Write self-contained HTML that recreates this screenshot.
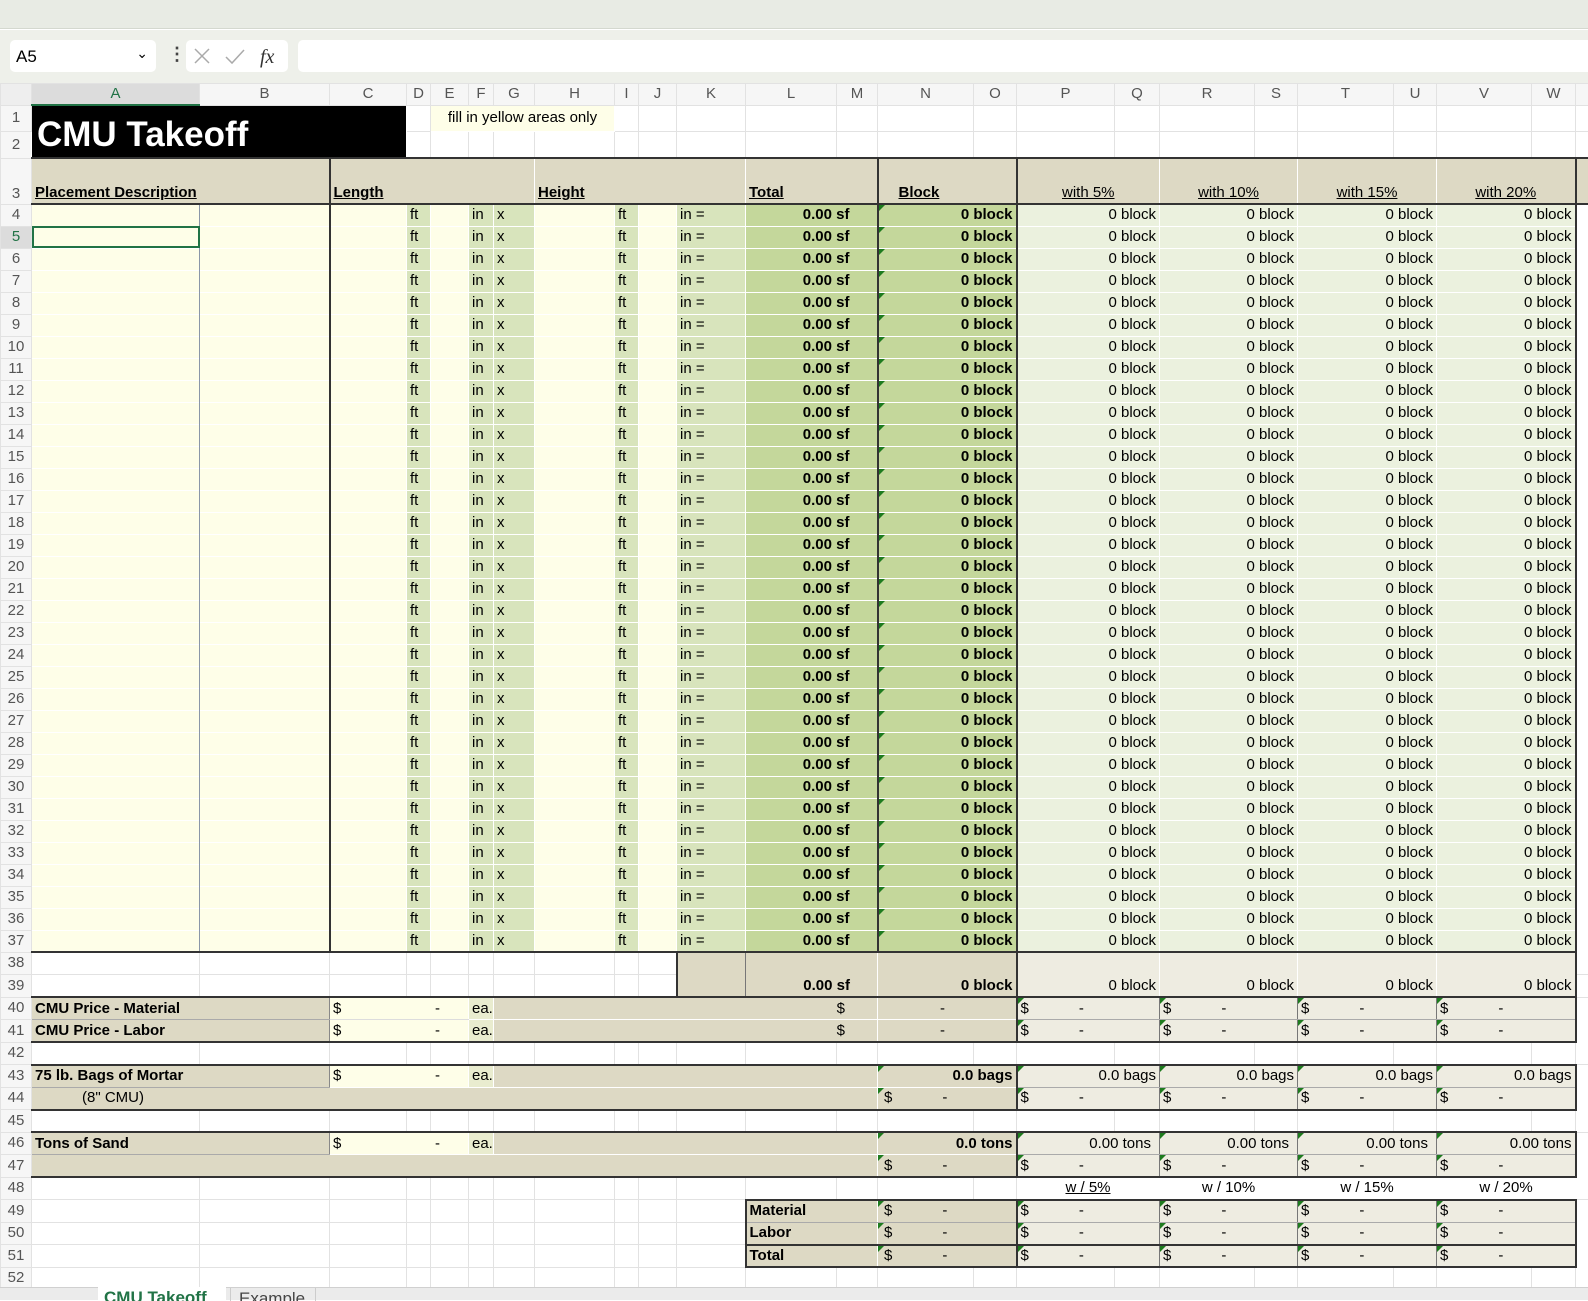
<!DOCTYPE html>
<html><head><meta charset="utf-8"><style>
*{box-sizing:border-box;margin:0;padding:0}
body{width:1588px;height:1300px;overflow:hidden;background:#fff;font-family:"Liberation Sans Narrow","Liberation Sans",sans-serif;position:relative;color:#000}
.top{position:absolute;left:0;top:0;width:1588px;height:29px;background:#e8ebe4;border-bottom:1px solid #d4d8cf}
.fb{position:absolute;left:0;top:30px;width:1588px;height:53px;background:#eef0ea}
.nb{position:absolute;left:10px;top:40px;width:146px;height:32px;background:#fff;border-radius:5px;font:17px "Liberation Sans",sans-serif;padding:7px 6px}
.fx{position:absolute;left:186px;top:40px;width:102px;height:32px;background:#fff;border-radius:5px}
.fi{position:absolute;left:298px;top:40px;width:1290px;height:32px;background:#fff;border-radius:5px 0 0 5px}
table{position:absolute;left:0;top:83px;border-collapse:collapse;table-layout:fixed;width:1588px}
td,th{font-size:15px;white-space:nowrap;overflow:hidden;padding:0 3px;height:22px;line-height:20px}
th{background:#f6f6f6;color:#555;font-weight:normal;text-align:center;border:1px solid #e2e2e2;padding:0}
tr.ch th{height:20px;font-size:15px}
td{border:1px solid transparent}
.w{border:1px solid #e2e2e2}
.y{background:#fefee8}.g{background:#d8e4bc}.G{background:#c4d79b}.p{background:#ebf1de}.t{background:#ddd9c4}.lt{background:#eeece1}.fe{background:#e9eccf}
.r{text-align:right}.b{font-weight:bold}.u{text-decoration:underline}
.a{border-bottom:1px dotted #888;border-right:1px solid #8a96a8}
.bb{border-bottom:1px dotted #888;border-right:2px solid #333}
.lk{border-left:2px solid #333}.rk{border-right:2px solid #333}
.d{border-right:1px dashed #999}
.tk{border-top:2px solid #333}.bk{border-bottom:2px solid #333}
.tri{position:relative}
.tri::before{content:"";position:absolute;left:0;top:0;border-top:6px solid #1e7b1e;border-right:6px solid transparent}
.sel{outline:2px solid #217346;outline-offset:-2px}
.tabs{position:absolute;left:0;top:1287px;width:1588px;height:13px;background:#ebebeb;border-top:1px solid #d0d0d0}
</style></head><body>
<div class="top"></div>
<div class="fb"></div>
<div class="nb">A5<span style="position:absolute;right:8px;top:5px;font-size:14px">&#8964;</span></div>
<div style="position:absolute;left:168px;top:44px;font:bold 18px 'Liberation Sans';color:#444">&#8942;</div>
<div class="fx"><svg width="102" height="32"><path d="M9 9l14 14M23 9L9 23" stroke="#aaa" stroke-width="1.5" fill="none"/><path d="M40 17l6 6 12-13" stroke="#aaa" stroke-width="1.5" fill="none"/><text x="74" y="23" font-family="Liberation Serif" font-style="italic" font-size="20" fill="#333">fx</text></svg></div>
<div class="fi"></div>
<table>
<colgroup><col style="width:31px"><col style="width:168px"><col style="width:130px"><col style="width:77px"><col style="width:24px"><col style="width:38px"><col style="width:25px"><col style="width:41px"><col style="width:80px"><col style="width:24px"><col style="width:38px"><col style="width:69px"><col style="width:91px"><col style="width:41px"><col style="width:96px"><col style="width:43px"><col style="width:98px"><col style="width:45px"><col style="width:95px"><col style="width:43px"><col style="width:96px"><col style="width:43px"><col style="width:95px"><col style="width:44px"><col style="width:13px"></colgroup>
<tr class="ch"><th style="background:#eee"></th><th style="background:#dcdcdc;border-bottom:2px solid #217346;color:#217346">A</th><th>B</th><th>C</th><th>D</th><th>E</th><th>F</th><th>G</th><th>H</th><th>I</th><th>J</th><th>K</th><th>L</th><th>M</th><th>N</th><th>O</th><th>P</th><th>Q</th><th>R</th><th>S</th><th>T</th><th>U</th><th>V</th><th>W</th><th></th></tr>
<tr style="height:26px"><th>1</th><td colspan="3" rowspan="2" style="background:#000;color:#fff;font:bold 35px 'Liberation Sans',sans-serif;padding:6px 5px 0;vertical-align:middle">CMU Takeoff</td><td class="w"></td><td colspan="4" style="background:#fefee8;text-align:center;font-size:15px">fill in yellow areas only</td><td class="w"></td><td class="w"></td><td class="w"></td><td class="w"></td><td class="w"></td><td class="w"></td><td class="w"></td><td class="w"></td><td class="w"></td><td class="w"></td><td class="w"></td><td class="w"></td><td class="w"></td><td class="w"></td><td class="w"></td></tr>
<tr style="height:27px"><th>2</th><td class="w"></td><td class="w"></td><td class="w"></td><td class="w"></td><td class="w"></td><td class="w"></td><td class="w"></td><td class="w"></td><td class="w"></td><td class="w"></td><td class="w"></td><td class="w"></td><td class="w"></td><td class="w"></td><td class="w"></td><td class="w"></td><td class="w"></td><td class="w"></td><td class="w"></td><td class="w"></td><td class="w"></td></tr>
<tr style="height:46px;vertical-align:bottom"><th style="vertical-align:bottom">3</th><td colspan="2" class="t tk bk rk b u">Placement Description</td><td colspan="5" class="t tk bk b u">Length</td><td colspan="4" class="t tk bk b u">Height</td><td colspan="2" class="t tk bk b u">Total</td><td colspan="2" class="t tk bk lk rk b u" style="padding-left:20px">Block</td><td colspan="2" class="t tk bk u" style="text-align:center">with 5%</td><td colspan="2" class="t tk bk u" style="text-align:center">with 10%</td><td colspan="2" class="t tk bk u" style="text-align:center">with 15%</td><td colspan="2" class="t tk bk rk u" style="text-align:center">with 20%</td><td class="t tk bk"></td></tr>
<tr><th>4</th><td class="y a"></td><td class="y bb"></td><td class="y"></td><td class="g">ft</td><td class="y"></td><td class="g">in</td><td class="g">x</td><td class="y"></td><td class="g">ft</td><td class="y"></td><td class="g">in =</td><td colspan="2" class="G r b" style="padding-right:27px">0.00 sf</td><td colspan="2" class="G r b lk rk tri">0 block</td><td colspan="2" class="p r d">0 block</td><td colspan="2" class="p r d">0 block</td><td colspan="2" class="p r d">0 block</td><td colspan="2" class="p r rk">0 block</td><td></td></tr>
<tr><th style="background:#dcdcdc;color:#217346">5</th><td class="y a sel"></td><td class="y bb"></td><td class="y"></td><td class="g">ft</td><td class="y"></td><td class="g">in</td><td class="g">x</td><td class="y"></td><td class="g">ft</td><td class="y"></td><td class="g">in =</td><td colspan="2" class="G r b" style="padding-right:27px">0.00 sf</td><td colspan="2" class="G r b lk rk tri">0 block</td><td colspan="2" class="p r d">0 block</td><td colspan="2" class="p r d">0 block</td><td colspan="2" class="p r d">0 block</td><td colspan="2" class="p r rk">0 block</td><td></td></tr>
<tr><th>6</th><td class="y a"></td><td class="y bb"></td><td class="y"></td><td class="g">ft</td><td class="y"></td><td class="g">in</td><td class="g">x</td><td class="y"></td><td class="g">ft</td><td class="y"></td><td class="g">in =</td><td colspan="2" class="G r b" style="padding-right:27px">0.00 sf</td><td colspan="2" class="G r b lk rk tri">0 block</td><td colspan="2" class="p r d">0 block</td><td colspan="2" class="p r d">0 block</td><td colspan="2" class="p r d">0 block</td><td colspan="2" class="p r rk">0 block</td><td></td></tr>
<tr><th>7</th><td class="y a"></td><td class="y bb"></td><td class="y"></td><td class="g">ft</td><td class="y"></td><td class="g">in</td><td class="g">x</td><td class="y"></td><td class="g">ft</td><td class="y"></td><td class="g">in =</td><td colspan="2" class="G r b" style="padding-right:27px">0.00 sf</td><td colspan="2" class="G r b lk rk tri">0 block</td><td colspan="2" class="p r d">0 block</td><td colspan="2" class="p r d">0 block</td><td colspan="2" class="p r d">0 block</td><td colspan="2" class="p r rk">0 block</td><td></td></tr>
<tr><th>8</th><td class="y a"></td><td class="y bb"></td><td class="y"></td><td class="g">ft</td><td class="y"></td><td class="g">in</td><td class="g">x</td><td class="y"></td><td class="g">ft</td><td class="y"></td><td class="g">in =</td><td colspan="2" class="G r b" style="padding-right:27px">0.00 sf</td><td colspan="2" class="G r b lk rk tri">0 block</td><td colspan="2" class="p r d">0 block</td><td colspan="2" class="p r d">0 block</td><td colspan="2" class="p r d">0 block</td><td colspan="2" class="p r rk">0 block</td><td></td></tr>
<tr><th>9</th><td class="y a"></td><td class="y bb"></td><td class="y"></td><td class="g">ft</td><td class="y"></td><td class="g">in</td><td class="g">x</td><td class="y"></td><td class="g">ft</td><td class="y"></td><td class="g">in =</td><td colspan="2" class="G r b" style="padding-right:27px">0.00 sf</td><td colspan="2" class="G r b lk rk tri">0 block</td><td colspan="2" class="p r d">0 block</td><td colspan="2" class="p r d">0 block</td><td colspan="2" class="p r d">0 block</td><td colspan="2" class="p r rk">0 block</td><td></td></tr>
<tr><th>10</th><td class="y a"></td><td class="y bb"></td><td class="y"></td><td class="g">ft</td><td class="y"></td><td class="g">in</td><td class="g">x</td><td class="y"></td><td class="g">ft</td><td class="y"></td><td class="g">in =</td><td colspan="2" class="G r b" style="padding-right:27px">0.00 sf</td><td colspan="2" class="G r b lk rk tri">0 block</td><td colspan="2" class="p r d">0 block</td><td colspan="2" class="p r d">0 block</td><td colspan="2" class="p r d">0 block</td><td colspan="2" class="p r rk">0 block</td><td></td></tr>
<tr><th>11</th><td class="y a"></td><td class="y bb"></td><td class="y"></td><td class="g">ft</td><td class="y"></td><td class="g">in</td><td class="g">x</td><td class="y"></td><td class="g">ft</td><td class="y"></td><td class="g">in =</td><td colspan="2" class="G r b" style="padding-right:27px">0.00 sf</td><td colspan="2" class="G r b lk rk tri">0 block</td><td colspan="2" class="p r d">0 block</td><td colspan="2" class="p r d">0 block</td><td colspan="2" class="p r d">0 block</td><td colspan="2" class="p r rk">0 block</td><td></td></tr>
<tr><th>12</th><td class="y a"></td><td class="y bb"></td><td class="y"></td><td class="g">ft</td><td class="y"></td><td class="g">in</td><td class="g">x</td><td class="y"></td><td class="g">ft</td><td class="y"></td><td class="g">in =</td><td colspan="2" class="G r b" style="padding-right:27px">0.00 sf</td><td colspan="2" class="G r b lk rk tri">0 block</td><td colspan="2" class="p r d">0 block</td><td colspan="2" class="p r d">0 block</td><td colspan="2" class="p r d">0 block</td><td colspan="2" class="p r rk">0 block</td><td></td></tr>
<tr><th>13</th><td class="y a"></td><td class="y bb"></td><td class="y"></td><td class="g">ft</td><td class="y"></td><td class="g">in</td><td class="g">x</td><td class="y"></td><td class="g">ft</td><td class="y"></td><td class="g">in =</td><td colspan="2" class="G r b" style="padding-right:27px">0.00 sf</td><td colspan="2" class="G r b lk rk tri">0 block</td><td colspan="2" class="p r d">0 block</td><td colspan="2" class="p r d">0 block</td><td colspan="2" class="p r d">0 block</td><td colspan="2" class="p r rk">0 block</td><td></td></tr>
<tr><th>14</th><td class="y a"></td><td class="y bb"></td><td class="y"></td><td class="g">ft</td><td class="y"></td><td class="g">in</td><td class="g">x</td><td class="y"></td><td class="g">ft</td><td class="y"></td><td class="g">in =</td><td colspan="2" class="G r b" style="padding-right:27px">0.00 sf</td><td colspan="2" class="G r b lk rk tri">0 block</td><td colspan="2" class="p r d">0 block</td><td colspan="2" class="p r d">0 block</td><td colspan="2" class="p r d">0 block</td><td colspan="2" class="p r rk">0 block</td><td></td></tr>
<tr><th>15</th><td class="y a"></td><td class="y bb"></td><td class="y"></td><td class="g">ft</td><td class="y"></td><td class="g">in</td><td class="g">x</td><td class="y"></td><td class="g">ft</td><td class="y"></td><td class="g">in =</td><td colspan="2" class="G r b" style="padding-right:27px">0.00 sf</td><td colspan="2" class="G r b lk rk tri">0 block</td><td colspan="2" class="p r d">0 block</td><td colspan="2" class="p r d">0 block</td><td colspan="2" class="p r d">0 block</td><td colspan="2" class="p r rk">0 block</td><td></td></tr>
<tr><th>16</th><td class="y a"></td><td class="y bb"></td><td class="y"></td><td class="g">ft</td><td class="y"></td><td class="g">in</td><td class="g">x</td><td class="y"></td><td class="g">ft</td><td class="y"></td><td class="g">in =</td><td colspan="2" class="G r b" style="padding-right:27px">0.00 sf</td><td colspan="2" class="G r b lk rk tri">0 block</td><td colspan="2" class="p r d">0 block</td><td colspan="2" class="p r d">0 block</td><td colspan="2" class="p r d">0 block</td><td colspan="2" class="p r rk">0 block</td><td></td></tr>
<tr><th>17</th><td class="y a"></td><td class="y bb"></td><td class="y"></td><td class="g">ft</td><td class="y"></td><td class="g">in</td><td class="g">x</td><td class="y"></td><td class="g">ft</td><td class="y"></td><td class="g">in =</td><td colspan="2" class="G r b" style="padding-right:27px">0.00 sf</td><td colspan="2" class="G r b lk rk tri">0 block</td><td colspan="2" class="p r d">0 block</td><td colspan="2" class="p r d">0 block</td><td colspan="2" class="p r d">0 block</td><td colspan="2" class="p r rk">0 block</td><td></td></tr>
<tr><th>18</th><td class="y a"></td><td class="y bb"></td><td class="y"></td><td class="g">ft</td><td class="y"></td><td class="g">in</td><td class="g">x</td><td class="y"></td><td class="g">ft</td><td class="y"></td><td class="g">in =</td><td colspan="2" class="G r b" style="padding-right:27px">0.00 sf</td><td colspan="2" class="G r b lk rk tri">0 block</td><td colspan="2" class="p r d">0 block</td><td colspan="2" class="p r d">0 block</td><td colspan="2" class="p r d">0 block</td><td colspan="2" class="p r rk">0 block</td><td></td></tr>
<tr><th>19</th><td class="y a"></td><td class="y bb"></td><td class="y"></td><td class="g">ft</td><td class="y"></td><td class="g">in</td><td class="g">x</td><td class="y"></td><td class="g">ft</td><td class="y"></td><td class="g">in =</td><td colspan="2" class="G r b" style="padding-right:27px">0.00 sf</td><td colspan="2" class="G r b lk rk tri">0 block</td><td colspan="2" class="p r d">0 block</td><td colspan="2" class="p r d">0 block</td><td colspan="2" class="p r d">0 block</td><td colspan="2" class="p r rk">0 block</td><td></td></tr>
<tr><th>20</th><td class="y a"></td><td class="y bb"></td><td class="y"></td><td class="g">ft</td><td class="y"></td><td class="g">in</td><td class="g">x</td><td class="y"></td><td class="g">ft</td><td class="y"></td><td class="g">in =</td><td colspan="2" class="G r b" style="padding-right:27px">0.00 sf</td><td colspan="2" class="G r b lk rk tri">0 block</td><td colspan="2" class="p r d">0 block</td><td colspan="2" class="p r d">0 block</td><td colspan="2" class="p r d">0 block</td><td colspan="2" class="p r rk">0 block</td><td></td></tr>
<tr><th>21</th><td class="y a"></td><td class="y bb"></td><td class="y"></td><td class="g">ft</td><td class="y"></td><td class="g">in</td><td class="g">x</td><td class="y"></td><td class="g">ft</td><td class="y"></td><td class="g">in =</td><td colspan="2" class="G r b" style="padding-right:27px">0.00 sf</td><td colspan="2" class="G r b lk rk tri">0 block</td><td colspan="2" class="p r d">0 block</td><td colspan="2" class="p r d">0 block</td><td colspan="2" class="p r d">0 block</td><td colspan="2" class="p r rk">0 block</td><td></td></tr>
<tr><th>22</th><td class="y a"></td><td class="y bb"></td><td class="y"></td><td class="g">ft</td><td class="y"></td><td class="g">in</td><td class="g">x</td><td class="y"></td><td class="g">ft</td><td class="y"></td><td class="g">in =</td><td colspan="2" class="G r b" style="padding-right:27px">0.00 sf</td><td colspan="2" class="G r b lk rk tri">0 block</td><td colspan="2" class="p r d">0 block</td><td colspan="2" class="p r d">0 block</td><td colspan="2" class="p r d">0 block</td><td colspan="2" class="p r rk">0 block</td><td></td></tr>
<tr><th>23</th><td class="y a"></td><td class="y bb"></td><td class="y"></td><td class="g">ft</td><td class="y"></td><td class="g">in</td><td class="g">x</td><td class="y"></td><td class="g">ft</td><td class="y"></td><td class="g">in =</td><td colspan="2" class="G r b" style="padding-right:27px">0.00 sf</td><td colspan="2" class="G r b lk rk tri">0 block</td><td colspan="2" class="p r d">0 block</td><td colspan="2" class="p r d">0 block</td><td colspan="2" class="p r d">0 block</td><td colspan="2" class="p r rk">0 block</td><td></td></tr>
<tr><th>24</th><td class="y a"></td><td class="y bb"></td><td class="y"></td><td class="g">ft</td><td class="y"></td><td class="g">in</td><td class="g">x</td><td class="y"></td><td class="g">ft</td><td class="y"></td><td class="g">in =</td><td colspan="2" class="G r b" style="padding-right:27px">0.00 sf</td><td colspan="2" class="G r b lk rk tri">0 block</td><td colspan="2" class="p r d">0 block</td><td colspan="2" class="p r d">0 block</td><td colspan="2" class="p r d">0 block</td><td colspan="2" class="p r rk">0 block</td><td></td></tr>
<tr><th>25</th><td class="y a"></td><td class="y bb"></td><td class="y"></td><td class="g">ft</td><td class="y"></td><td class="g">in</td><td class="g">x</td><td class="y"></td><td class="g">ft</td><td class="y"></td><td class="g">in =</td><td colspan="2" class="G r b" style="padding-right:27px">0.00 sf</td><td colspan="2" class="G r b lk rk tri">0 block</td><td colspan="2" class="p r d">0 block</td><td colspan="2" class="p r d">0 block</td><td colspan="2" class="p r d">0 block</td><td colspan="2" class="p r rk">0 block</td><td></td></tr>
<tr><th>26</th><td class="y a"></td><td class="y bb"></td><td class="y"></td><td class="g">ft</td><td class="y"></td><td class="g">in</td><td class="g">x</td><td class="y"></td><td class="g">ft</td><td class="y"></td><td class="g">in =</td><td colspan="2" class="G r b" style="padding-right:27px">0.00 sf</td><td colspan="2" class="G r b lk rk tri">0 block</td><td colspan="2" class="p r d">0 block</td><td colspan="2" class="p r d">0 block</td><td colspan="2" class="p r d">0 block</td><td colspan="2" class="p r rk">0 block</td><td></td></tr>
<tr><th>27</th><td class="y a"></td><td class="y bb"></td><td class="y"></td><td class="g">ft</td><td class="y"></td><td class="g">in</td><td class="g">x</td><td class="y"></td><td class="g">ft</td><td class="y"></td><td class="g">in =</td><td colspan="2" class="G r b" style="padding-right:27px">0.00 sf</td><td colspan="2" class="G r b lk rk tri">0 block</td><td colspan="2" class="p r d">0 block</td><td colspan="2" class="p r d">0 block</td><td colspan="2" class="p r d">0 block</td><td colspan="2" class="p r rk">0 block</td><td></td></tr>
<tr><th>28</th><td class="y a"></td><td class="y bb"></td><td class="y"></td><td class="g">ft</td><td class="y"></td><td class="g">in</td><td class="g">x</td><td class="y"></td><td class="g">ft</td><td class="y"></td><td class="g">in =</td><td colspan="2" class="G r b" style="padding-right:27px">0.00 sf</td><td colspan="2" class="G r b lk rk tri">0 block</td><td colspan="2" class="p r d">0 block</td><td colspan="2" class="p r d">0 block</td><td colspan="2" class="p r d">0 block</td><td colspan="2" class="p r rk">0 block</td><td></td></tr>
<tr><th>29</th><td class="y a"></td><td class="y bb"></td><td class="y"></td><td class="g">ft</td><td class="y"></td><td class="g">in</td><td class="g">x</td><td class="y"></td><td class="g">ft</td><td class="y"></td><td class="g">in =</td><td colspan="2" class="G r b" style="padding-right:27px">0.00 sf</td><td colspan="2" class="G r b lk rk tri">0 block</td><td colspan="2" class="p r d">0 block</td><td colspan="2" class="p r d">0 block</td><td colspan="2" class="p r d">0 block</td><td colspan="2" class="p r rk">0 block</td><td></td></tr>
<tr><th>30</th><td class="y a"></td><td class="y bb"></td><td class="y"></td><td class="g">ft</td><td class="y"></td><td class="g">in</td><td class="g">x</td><td class="y"></td><td class="g">ft</td><td class="y"></td><td class="g">in =</td><td colspan="2" class="G r b" style="padding-right:27px">0.00 sf</td><td colspan="2" class="G r b lk rk tri">0 block</td><td colspan="2" class="p r d">0 block</td><td colspan="2" class="p r d">0 block</td><td colspan="2" class="p r d">0 block</td><td colspan="2" class="p r rk">0 block</td><td></td></tr>
<tr><th>31</th><td class="y a"></td><td class="y bb"></td><td class="y"></td><td class="g">ft</td><td class="y"></td><td class="g">in</td><td class="g">x</td><td class="y"></td><td class="g">ft</td><td class="y"></td><td class="g">in =</td><td colspan="2" class="G r b" style="padding-right:27px">0.00 sf</td><td colspan="2" class="G r b lk rk tri">0 block</td><td colspan="2" class="p r d">0 block</td><td colspan="2" class="p r d">0 block</td><td colspan="2" class="p r d">0 block</td><td colspan="2" class="p r rk">0 block</td><td></td></tr>
<tr><th>32</th><td class="y a"></td><td class="y bb"></td><td class="y"></td><td class="g">ft</td><td class="y"></td><td class="g">in</td><td class="g">x</td><td class="y"></td><td class="g">ft</td><td class="y"></td><td class="g">in =</td><td colspan="2" class="G r b" style="padding-right:27px">0.00 sf</td><td colspan="2" class="G r b lk rk tri">0 block</td><td colspan="2" class="p r d">0 block</td><td colspan="2" class="p r d">0 block</td><td colspan="2" class="p r d">0 block</td><td colspan="2" class="p r rk">0 block</td><td></td></tr>
<tr><th>33</th><td class="y a"></td><td class="y bb"></td><td class="y"></td><td class="g">ft</td><td class="y"></td><td class="g">in</td><td class="g">x</td><td class="y"></td><td class="g">ft</td><td class="y"></td><td class="g">in =</td><td colspan="2" class="G r b" style="padding-right:27px">0.00 sf</td><td colspan="2" class="G r b lk rk tri">0 block</td><td colspan="2" class="p r d">0 block</td><td colspan="2" class="p r d">0 block</td><td colspan="2" class="p r d">0 block</td><td colspan="2" class="p r rk">0 block</td><td></td></tr>
<tr><th>34</th><td class="y a"></td><td class="y bb"></td><td class="y"></td><td class="g">ft</td><td class="y"></td><td class="g">in</td><td class="g">x</td><td class="y"></td><td class="g">ft</td><td class="y"></td><td class="g">in =</td><td colspan="2" class="G r b" style="padding-right:27px">0.00 sf</td><td colspan="2" class="G r b lk rk tri">0 block</td><td colspan="2" class="p r d">0 block</td><td colspan="2" class="p r d">0 block</td><td colspan="2" class="p r d">0 block</td><td colspan="2" class="p r rk">0 block</td><td></td></tr>
<tr><th>35</th><td class="y a"></td><td class="y bb"></td><td class="y"></td><td class="g">ft</td><td class="y"></td><td class="g">in</td><td class="g">x</td><td class="y"></td><td class="g">ft</td><td class="y"></td><td class="g">in =</td><td colspan="2" class="G r b" style="padding-right:27px">0.00 sf</td><td colspan="2" class="G r b lk rk tri">0 block</td><td colspan="2" class="p r d">0 block</td><td colspan="2" class="p r d">0 block</td><td colspan="2" class="p r d">0 block</td><td colspan="2" class="p r rk">0 block</td><td></td></tr>
<tr><th>36</th><td class="y a"></td><td class="y bb"></td><td class="y"></td><td class="g">ft</td><td class="y"></td><td class="g">in</td><td class="g">x</td><td class="y"></td><td class="g">ft</td><td class="y"></td><td class="g">in =</td><td colspan="2" class="G r b" style="padding-right:27px">0.00 sf</td><td colspan="2" class="G r b lk rk tri">0 block</td><td colspan="2" class="p r d">0 block</td><td colspan="2" class="p r d">0 block</td><td colspan="2" class="p r d">0 block</td><td colspan="2" class="p r rk">0 block</td><td></td></tr>
<tr><th>37</th><td class="y bk" style="border-right:1px solid #8a96a8"></td><td class="y bk rk"></td><td class="y bk"></td><td class="g bk">ft</td><td class="y bk"></td><td class="g bk">in</td><td class="g bk">x</td><td class="y bk"></td><td class="g bk">ft</td><td class="y bk"></td><td class="g bk">in =</td><td colspan="2" class="G r b bk" style="padding-right:27px">0.00 sf</td><td colspan="2" class="G r b lk rk bk tri">0 block</td><td colspan="2" class="p r d bk">0 block</td><td colspan="2" class="p r d bk">0 block</td><td colspan="2" class="p r d bk">0 block</td><td colspan="2" class="p r rk bk">0 block</td><td></td></tr>
<tr style="height:22.5px"><th>38</th><td class="w"></td><td class="w"></td><td class="w"></td><td class="w"></td><td class="w"></td><td class="w"></td><td class="w"></td><td class="w"></td><td class="w"></td><td class="w"></td><td class="t lk" rowspan="2" style="border-right:1px solid #777;border-bottom:2px solid #333"></td><td colspan="2" rowspan="2" class="t r b bk" style="padding-right:27px;vertical-align:bottom">0.00 sf</td><td colspan="2" rowspan="2" class="t r b bk rk" style="vertical-align:bottom;border-left:1px solid #777">0 block</td><td colspan="2" rowspan="2" class="lt r d bk" style="vertical-align:bottom">0 block</td><td colspan="2" rowspan="2" class="lt r d bk" style="vertical-align:bottom">0 block</td><td colspan="2" rowspan="2" class="lt r d bk" style="vertical-align:bottom">0 block</td><td colspan="2" rowspan="2" class="lt r rk bk" style="vertical-align:bottom">0 block</td><td class="w"></td></tr>
<tr style="height:22.5px"><th>39</th><td class="w bk"></td><td class="w bk"></td><td class="w bk"></td><td class="w bk"></td><td class="w bk"></td><td class="w bk"></td><td class="w bk"></td><td class="w bk"></td><td class="w bk"></td><td class="w bk"></td><td class="w"></td></tr>
<tr style="height:22.5px"><th>40</th><td colspan="2" class="t b" style="border-right:1px solid #888;border-bottom:1px solid #aaa">CMU Price - Material</td><td colspan="3" class="y" style="border-bottom:1px solid #ddd">$<span style="float:right;padding-right:25px">-</span></td><td class="fe">ea.</td><td colspan="7" class="t r" style="padding-right:32px">$</td><td colspan="2" class="t rk" style="padding-left:62px">-</td><td colspan="2" class="lt tri" style="border-bottom:1px solid #aaa;border-right:1px solid #777">$<span style="padding-left:50px">-</span></td><td colspan="2" class="lt tri" style="border-bottom:1px solid #aaa;border-right:1px solid #777">$<span style="padding-left:50px">-</span></td><td colspan="2" class="lt tri" style="border-bottom:1px solid #aaa;border-right:1px solid #777">$<span style="padding-left:50px">-</span></td><td colspan="2" class="lt tri rk" style="border-bottom:1px solid #aaa">$<span style="padding-left:50px">-</span></td><td></td></tr>
<tr style="height:22.5px"><th>41</th><td colspan="2" class="t b bk" style="border-right:1px solid #888">CMU Price - Labor</td><td colspan="3" class="y bk">$<span style="float:right;padding-right:25px">-</span></td><td class="fe bk">ea.</td><td colspan="7" class="t r bk" style="padding-right:32px">$</td><td colspan="2" class="t rk bk" style="padding-left:62px">-</td><td colspan="2" class="lt tri bk" style="border-right:1px solid #777">$<span style="padding-left:50px">-</span></td><td colspan="2" class="lt tri bk" style="border-right:1px solid #777">$<span style="padding-left:50px">-</span></td><td colspan="2" class="lt tri bk" style="border-right:1px solid #777">$<span style="padding-left:50px">-</span></td><td colspan="2" class="lt tri rk bk">$<span style="padding-left:50px">-</span></td><td></td></tr>
<tr style="height:22.5px"><th>42</th><td class="w"></td><td class="w"></td><td class="w"></td><td class="w"></td><td class="w"></td><td class="w"></td><td class="w"></td><td class="w"></td><td class="w"></td><td class="w"></td><td class="w"></td><td class="w"></td><td class="w"></td><td class="w"></td><td class="w"></td><td class="w"></td><td class="w"></td><td class="w"></td><td class="w"></td><td class="w"></td><td class="w"></td><td class="w"></td><td class="w"></td><td class="w"></td></tr>
<tr style="height:22.5px"><th>43</th><td colspan="2" class="t b tk" style="border-right:1px solid #888;border-bottom:1px solid #aaa">75 lb. Bags of Mortar</td><td colspan="3" class="y tk">$<span style="float:right;padding-right:25px">-</span></td><td class="fe tk">ea.</td><td colspan="7" class="t tk"></td><td colspan="2" class="t r b rk tk tri">0.0 bags</td><td colspan="2" class="lt r tk tri" style="border-bottom:1px solid #aaa;border-right:1px solid #777">0.0 bags</td><td colspan="2" class="lt r tk tri" style="border-bottom:1px solid #aaa;border-right:1px solid #777">0.0 bags</td><td colspan="2" class="lt r tk tri" style="border-bottom:1px solid #aaa;border-right:1px solid #777">0.0 bags</td><td colspan="2" class="lt r tk rk tri" style="border-bottom:1px solid #aaa">0.0 bags</td><td></td></tr>
<tr style="height:22.5px"><th>44</th><td colspan="13" class="t bk" style="padding-left:50px">(8" CMU)</td><td colspan="2" class="t rk bk tri" style="padding-left:6px">$<span style="padding-left:50px">-</span></td><td colspan="2" class="lt tri bk" style="border-right:1px solid #777">$<span style="padding-left:50px">-</span></td><td colspan="2" class="lt tri bk" style="border-right:1px solid #777">$<span style="padding-left:50px">-</span></td><td colspan="2" class="lt tri bk" style="border-right:1px solid #777">$<span style="padding-left:50px">-</span></td><td colspan="2" class="lt tri rk bk">$<span style="padding-left:50px">-</span></td><td></td></tr>
<tr style="height:22.5px"><th>45</th><td class="w"></td><td class="w"></td><td class="w"></td><td class="w"></td><td class="w"></td><td class="w"></td><td class="w"></td><td class="w"></td><td class="w"></td><td class="w"></td><td class="w"></td><td class="w"></td><td class="w"></td><td class="w"></td><td class="w"></td><td class="w"></td><td class="w"></td><td class="w"></td><td class="w"></td><td class="w"></td><td class="w"></td><td class="w"></td><td class="w"></td><td class="w"></td></tr>
<tr style="height:22.5px"><th>46</th><td colspan="2" class="t b tk" style="border-right:1px solid #888;border-bottom:1px solid #aaa">Tons of Sand</td><td colspan="3" class="y tk">$<span style="float:right;padding-right:25px">-</span></td><td class="fe tk">ea.</td><td colspan="7" class="t tk"></td><td colspan="2" class="t r b rk tk tri">0.0 tons</td><td colspan="2" class="lt r tk tri" style="border-bottom:1px solid #aaa;border-right:1px solid #777;padding-right:8px">0.00 tons</td><td colspan="2" class="lt r tk tri" style="border-bottom:1px solid #aaa;border-right:1px solid #777;padding-right:8px">0.00 tons</td><td colspan="2" class="lt r tk tri" style="border-bottom:1px solid #aaa;border-right:1px solid #777;padding-right:8px">0.00 tons</td><td colspan="2" class="lt r tk rk tri" style="border-bottom:1px solid #aaa">0.00 tons</td><td></td></tr>
<tr style="height:22.5px"><th>47</th><td colspan="13" class="t bk"></td><td colspan="2" class="t rk bk tri" style="padding-left:6px">$<span style="padding-left:50px">-</span></td><td colspan="2" class="lt tri bk" style="border-right:1px solid #777">$<span style="padding-left:50px">-</span></td><td colspan="2" class="lt tri bk" style="border-right:1px solid #777">$<span style="padding-left:50px">-</span></td><td colspan="2" class="lt tri bk" style="border-right:1px solid #777">$<span style="padding-left:50px">-</span></td><td colspan="2" class="lt tri rk bk">$<span style="padding-left:50px">-</span></td><td></td></tr>
<tr style="height:22.5px"><th>48</th><td class="w"></td><td class="w"></td><td class="w"></td><td class="w"></td><td class="w"></td><td class="w"></td><td class="w"></td><td class="w"></td><td class="w"></td><td class="w"></td><td class="w"></td><td class="w"></td><td class="w"></td><td class="w"></td><td class="w"></td><td colspan="2" style="text-align:center"><span class="u">w / 5%</span></td><td colspan="2" style="text-align:center">w / 10%</td><td colspan="2" style="text-align:center">w / 15%</td><td colspan="2" style="text-align:center">w / 20%</td><td class="w"></td></tr>
<tr style="height:22.5px"><th>49</th><td class="w"></td><td class="w"></td><td class="w"></td><td class="w"></td><td class="w"></td><td class="w"></td><td class="w"></td><td class="w"></td><td class="w"></td><td class="w"></td><td class="w"></td><td colspan="2" class="t b lk tk" style="border-bottom:1px solid #aaa">Material</td><td colspan="2" class="t rk tk tri" style="padding-left:6px;border-bottom:1px solid #aaa">$<span style="padding-left:50px">-</span></td><td colspan="2" class="lt tri tk" style="border-bottom:1px solid #aaa;border-right:1px solid #777">$<span style="padding-left:50px">-</span></td><td colspan="2" class="lt tri tk" style="border-bottom:1px solid #aaa;border-right:1px solid #777">$<span style="padding-left:50px">-</span></td><td colspan="2" class="lt tri tk" style="border-bottom:1px solid #aaa;border-right:1px solid #777">$<span style="padding-left:50px">-</span></td><td colspan="2" class="lt tri rk tk" style="border-bottom:1px solid #aaa">$<span style="padding-left:50px">-</span></td><td></td></tr>
<tr style="height:22.5px"><th>50</th><td class="w"></td><td class="w"></td><td class="w"></td><td class="w"></td><td class="w"></td><td class="w"></td><td class="w"></td><td class="w"></td><td class="w"></td><td class="w"></td><td class="w"></td><td colspan="2" class="t b lk bk">Labor</td><td colspan="2" class="t rk bk tri" style="padding-left:6px">$<span style="padding-left:50px">-</span></td><td colspan="2" class="lt tri bk" style="border-right:1px solid #777">$<span style="padding-left:50px">-</span></td><td colspan="2" class="lt tri bk" style="border-right:1px solid #777">$<span style="padding-left:50px">-</span></td><td colspan="2" class="lt tri bk" style="border-right:1px solid #777">$<span style="padding-left:50px">-</span></td><td colspan="2" class="lt tri rk bk">$<span style="padding-left:50px">-</span></td><td></td></tr>
<tr style="height:22.5px"><th>51</th><td class="w"></td><td class="w"></td><td class="w"></td><td class="w"></td><td class="w"></td><td class="w"></td><td class="w"></td><td class="w"></td><td class="w"></td><td class="w"></td><td class="w"></td><td colspan="2" class="t b lk bk">Total</td><td colspan="2" class="t rk bk tri" style="padding-left:6px">$<span style="padding-left:50px">-</span></td><td colspan="2" class="lt tri bk" style="border-right:1px solid #777">$<span style="padding-left:50px">-</span></td><td colspan="2" class="lt tri bk" style="border-right:1px solid #777">$<span style="padding-left:50px">-</span></td><td colspan="2" class="lt tri bk" style="border-right:1px solid #777">$<span style="padding-left:50px">-</span></td><td colspan="2" class="lt tri rk bk">$<span style="padding-left:50px">-</span></td><td></td></tr>
<tr style="height:22.5px"><th>52</th><td class="w"></td><td class="w"></td><td class="w"></td><td class="w"></td><td class="w"></td><td class="w"></td><td class="w"></td><td class="w"></td><td class="w"></td><td class="w"></td><td class="w"></td><td class="w"></td><td class="w"></td><td class="w"></td><td class="w"></td><td class="w"></td><td class="w"></td><td class="w"></td><td class="w"></td><td class="w"></td><td class="w"></td><td class="w"></td><td class="w"></td><td class="w"></td></tr>
</table>
<div class="tabs"><div style="position:absolute;left:98px;top:-1px;width:128px;height:14px;background:#fff;color:#217346;font-weight:bold;font-size:17px;line-height:22px;padding-left:6px;overflow:hidden">CMU Takeoff</div><div style="position:absolute;left:230px;top:0;width:86px;height:13px;color:#444;font-size:17px;line-height:22px;padding-left:8px;overflow:hidden;border-left:1px solid #ccc;border-right:1px solid #ccc">Example</div></div>
</body></html>
